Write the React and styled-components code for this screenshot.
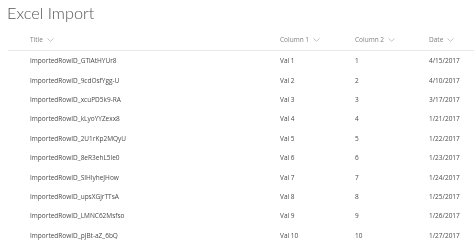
import React from 'react';
import styled, { createGlobalStyle } from 'styled-components';

const GlobalStyle = createGlobalStyle`
  html, body {
    margin: 0;
    padding: 0;
    background: #ffffff;
  }
  body {
    font-family: "Open Sans", "Noto Sans", sans-serif;
  }
`;

const Page = styled.div`
  width: 474px;
  height: 248px;
  overflow: hidden;
  background: #fff;
`;

const Heading = styled.h1`
  margin: 0;
  padding: 2px 0 0 7px;
  height: 29px;
  box-sizing: border-box;
  font-family: "Lato", "Open Sans", sans-serif;
  font-size: 16.3px;
  line-height: 22px;
  font-weight: 300;
  color: #555;
  will-change: transform;
`;

const Table = styled.div`
  margin-left: 8px;
  will-change: transform;
`;

const Row = styled.div`
  display: grid;
  grid-template-columns: 250px 75px 74px 1fr;
  padding-left: 22px;
  align-items: center;
  height: ${p => (p.$header ? '21px' : '19.4px')};
  border-bottom: ${p => (p.$header ? '1px solid #e8e8e8' : 'none')};
  font-size: 6.5px;
  color: ${p => (p.$header ? '#808080' : '#4a4a4a')};
`;

const Cell = styled.div`
  white-space: nowrap;
  display: flex;
  align-items: center;
  gap: 4px;
`;

function Chevron () {
  return (
    <svg width="7" height="4" viewBox="0 0 7 4">
      <path d="M0.5 0.5 L3.5 3.3 L6.5 0.5" fill="none" stroke="#aaa" strokeWidth="0.7" />
    </svg>
  );
}

const columns = ['Title', 'Column 1', 'Column 2', 'Date'];

const rows = [
  ['ImportedRowID_GTlAtHYUr8', '4/15/2017'],
  ['ImportedRowID_9cdOsfYgg-U', '4/10/2017'],
  ['ImportedRowID_xcuPD5k9-RA', '3/17/2017'],
  ['ImportedRowID_kLyoYYZexx8', '1/21/2017'],
  ['ImportedRowID_2U1rKp2MQyU', '1/22/2017'],
  ['ImportedRowID_8eR3ehL5le0', '1/23/2017'],
  ['ImportedRowID_SIHlyheJHow', '1/24/2017'],
  ['ImportedRowID_upsXGjrTTsA', '1/25/2017'],
  ['ImportedRowID_LMNC62Msfso', '1/26/2017'],
  ['ImportedRowID_pJBt-aZ_6bQ', '1/27/2017'],
];

export default function App () {
  return (
    <Page>
      <GlobalStyle />
      <Heading>Excel Import</Heading>
      <Table>
        <Row $header>
          {columns.map(c => (
            <Cell key={c}>{c} <Chevron /></Cell>
          ))}
        </Row>
        {rows.map((r, i) => (
          <Row key={r[0]}>
            <Cell>{r[0]}</Cell>
            <Cell>Val {i + 1}</Cell>
            <Cell>{i + 1}</Cell>
            <Cell>{r[1]}</Cell>
          </Row>
        ))}
      </Table>
    </Page>
  );
}
